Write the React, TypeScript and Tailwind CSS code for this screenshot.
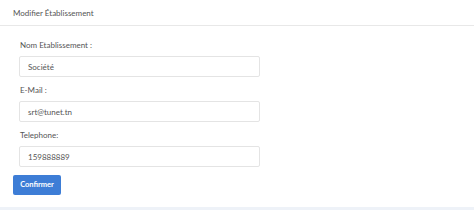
export default function App() {
  const fields = [
    { label: "Nom Etablissement :", value: "Société" },
    { label: "E-Mail :", value: "srt@tunet.tn" },
    { label: "Telephone:", value: "159888889" },
  ];
  return (
    <div className="w-[474px] h-[210px] bg-white flex flex-col font-['Lato',sans-serif] text-[#555]">
      <div className="h-[26px] shrink-0 border-b border-[#e8e8e8] flex items-center px-[13px] text-[8px]">
        Modifier Établissement
      </div>
      <div className="flex-1 pt-[13px] px-[13px]">
        <div className="pl-[6px] flex flex-col">
          {fields.map((f) => (
            <div key={f.label} className="flex flex-col pb-[7px]">
              <label className="text-[8px] h-[13px] leading-[13px] mb-[4px] pl-px">{f.label}</label>
              <div className="w-[241px] h-[21px] border border-[#e4e4e4] rounded-[2px] flex items-center px-[8px] text-[8px]">
                {f.value}
              </div>
            </div>
          ))}
        </div>
        <button className="mt-px w-[48px] h-[20px] rounded-[2px] bg-[#3d7dd6] text-white text-[7.5px] font-bold flex items-center justify-center">
          Confirmer
        </button>
      </div>
      <div className="h-[3px] shrink-0 bg-[#eef2f8]" />
    </div>
  );
}
